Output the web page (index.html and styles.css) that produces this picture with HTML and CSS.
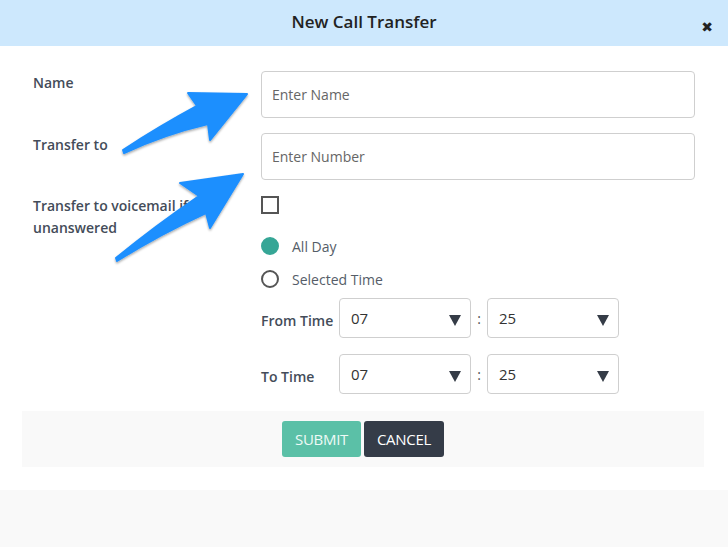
FILE: index.html
```html
<!DOCTYPE html>
<html>
<head>
<meta charset="utf-8">
<link rel="stylesheet" href="styles.css">
</head>
<body>
<div class="modal">
  <div class="modal-header">
    <h1 class="title">New Call Transfer</h1>
    <span class="close">&#x2716;</span>
  </div>
  <div class="modal-body">
    <div class="form">
      <label class="label label-input">Name</label>
      <div class="field"><input class="text-input" type="text" placeholder="Enter Name"></div>

      <label class="label label-input">Transfer to</label>
      <div class="field"><input class="text-input" type="text" placeholder="Enter Number"></div>

      <label class="label label-check">Transfer to voicemail if unanswered</label>
      <div class="field options">
        <span class="checkbox"></span>
        <div class="radio-row"><span class="radio checked"></span><span class="radio-label">All Day</span></div>
        <div class="radio-row"><span class="radio"></span><span class="radio-label">Selected Time</span></div>
        <div class="time-row">
          <span class="time-label">From Time</span>
          <div class="select"><span>07</span><span class="caret"></span></div>
          <span class="colon">:</span>
          <div class="select"><span>25</span><span class="caret"></span></div>
        </div>
        <div class="time-row">
          <span class="time-label">To Time</span>
          <div class="select"><span>07</span><span class="caret"></span></div>
          <span class="colon">:</span>
          <div class="select"><span>25</span><span class="caret"></span></div>
        </div>
      </div>
    </div>
    <div class="actions">
      <button class="btn btn-submit">SUBMIT</button>
      <button class="btn btn-cancel">CANCEL</button>
    </div>
  </div>
  <div class="modal-bottom"></div>

  <svg class="arrows" width="728" height="547" viewBox="0 0 728 547">
    <defs>
      <filter id="sh" x="-20%" y="-20%" width="140%" height="140%">
        <feDropShadow dx="0" dy="1.5" stdDeviation="1.2" flood-color="#000" flood-opacity="0.35"/>
      </filter>
    </defs>
    <path filter="url(#sh)" fill="#1e8ffe" stroke="#1e8ffe" stroke-width="2" stroke-linejoin="round"
      d="M123,150 Q160,126 197,106 L188,93 L247,94 L210,140 L208,124 Q165,134 124,153 Z"/>
    <path filter="url(#sh)" fill="#1e8ffe" stroke="#1e8ffe" stroke-width="2" stroke-linejoin="round"
      d="M116,258 Q155,226 199,196 L180,183 L243,174 L210,228 L206,213 Q160,234 117,261 Z"/>
  </svg>
</div>
</body>
</html>
```

FILE: styles.css
```css
* { box-sizing: border-box; }
html, body { margin: 0; padding: 0; }
body {
  font-family: "Open Sans", "Noto Sans", sans-serif;
  background: #f9f9f9;
  color: #3b4452;
}
.modal {
  position: relative;
  width: 728px;
  height: 547px;
  display: flex;
  flex-direction: column;
}
.modal-header {
  height: 46px;
  background: #cde8fd;
  display: flex;
  align-items: center;
  justify-content: center;
  position: relative;
}
.title {
  margin: 0;
  font-size: 17px;
  font-weight: 600;
  color: #222;
  line-height: 1;
  padding-bottom: 4px;
}
.close {
  position: absolute;
  right: 15px;
  top: 20px;
  font-size: 14px;
  line-height: 1;
  color: #222;
  font-family: "DejaVu Sans", sans-serif;
  font-weight: bold;
}
.modal-body {
  background: #fff;
  height: 444px;
  padding: 25px 24px 0 22px;
}
.modal-bottom {
  flex: 1;
  background: #f9f9f9;
}
.form {
  display: grid;
  grid-template-columns: 228px 434px;
  row-gap: 15px;
  padding-left: 11px;
}
.label {
  font-size: 14px;
  font-weight: 600;
  color: #444c59;
  line-height: 22px;
}
.label-input { padding-top: 1px; }
.label-check { padding-right: 6px; margin-top: 0; }
.text-input {
  width: 434px;
  height: 47px;
  border: 1px solid #cfcfcf;
  border-radius: 4px;
  padding: 0 10px;
  font-family: "Open Sans", sans-serif;
  font-size: 14px;
  color: #555;
  outline: none;
}
.text-input::placeholder { color: #666; }
.options {
  display: flex;
  flex-direction: column;
  margin-top: 1px;
}
.checkbox {
  width: 18px;
  height: 18px;
  border: 2px solid #555;
  display: block;
}
.radio-row {
  display: flex;
  align-items: center;
  height: 22px;
  margin-top: 21px;
}
.radio-row + .radio-row { margin-top: 11px; }
.radio {
  width: 18px;
  height: 18px;
  border-radius: 50%;
  border: 2px solid #555;
  margin-right: 13px;
}
.radio.checked {
  background: #36a696;
  border-color: #36a696;
}
.radio-label {
  font-size: 14px;
  color: #555d68;
}
.time-row {
  display: flex;
  align-items: center;
  margin-top: 8px;
}
.time-row + .time-row { margin-top: 16px; }
.time-label {
  width: 78px;
  font-size: 14px;
  font-weight: 600;
  color: #444c59;
  padding-top: 4px;
}
.select {
  width: 132px;
  height: 40px;
  border: 1px solid #cfcfcf;
  border-radius: 4px;
  display: flex;
  align-items: center;
  justify-content: space-between;
  padding: 0 9px 0 11px;
  font-size: 15px;
  color: #333;
}
.caret {
  width: 0;
  height: 0;
  border-left: 6px solid transparent;
  border-right: 6px solid transparent;
  border-top: 11px solid #353c47;
  margin-top: 4px;
}
.colon {
  width: 16px;
  text-align: center;
  font-size: 14px;
  color: #555;
}
.actions {
  margin-top: 17px;
  height: 56px;
  background: #f9f9f9;
  display: flex;
  justify-content: center;
  align-items: center;
  gap: 3px;
  width: 682px;
}
.btn {
  height: 36px;
  border: none;
  border-radius: 3px;
  color: #fff;
  font-family: "Open Sans", sans-serif;
  font-size: 15px;
  padding: 0 11px;
  letter-spacing: -0.3px;
}
.btn-submit { background: #5bc0a7; width: 79px; color: #eefaf6; }
.btn-cancel { background: #353c48; width: 80px; }
.arrows {
  position: absolute;
  left: 0;
  top: 0;
  pointer-events: none;
}
```
